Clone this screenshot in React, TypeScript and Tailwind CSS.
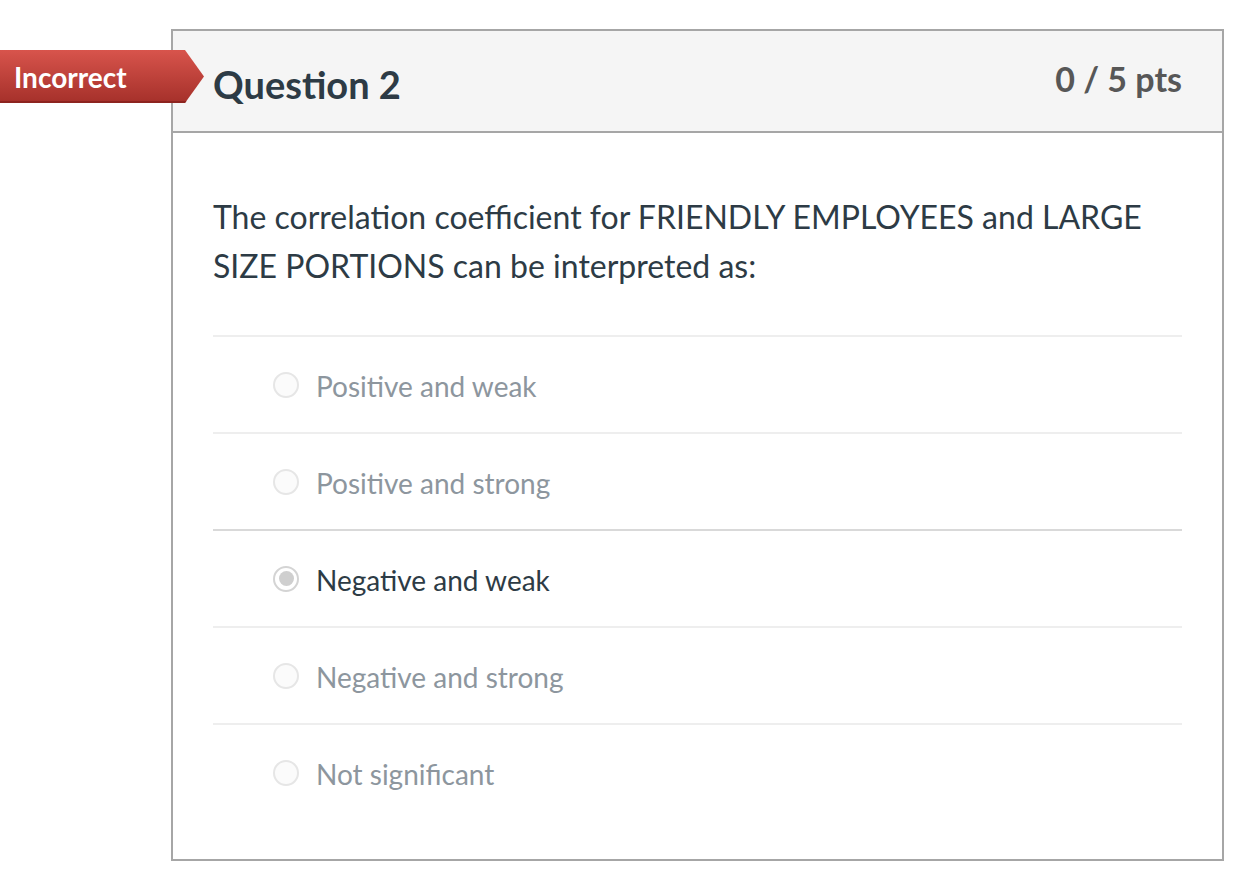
import type { JSX } from "react";

type Answer = { label: string; selected?: boolean };

const answers: Answer[] = [
  { label: "Positive and weak" },
  { label: "Positive and strong" },
  { label: "Negative and weak", selected: true },
  { label: "Negative and strong" },
  { label: "Not significant" },
];

const Radio = ({ selected }: { selected?: boolean }): JSX.Element =>
  selected ? (
    <span className="flex h-[26px] w-[26px] shrink-0 items-center justify-center rounded-full border-2 border-[#d4d4d4] bg-white">
      <span className="h-[15px] w-[15px] rounded-full bg-[#cfcfcf]" />
    </span>
  ) : (
    <span className="h-[26px] w-[26px] shrink-0 rounded-full border-2 border-[#e6e6e6] bg-[#fbfbfb]" />
  );

export default function App(): JSX.Element {
  return (
    <div className="min-h-[876px] w-full bg-white pt-[29px] [font-family:Lato,'Noto_Sans',sans-serif]">
      <div className="relative ml-[171px] w-[1053px] border-2 border-[#a6a6a6] bg-white">
        {/* header */}
        <div className="flex h-[102px] items-start justify-between border-b-2 border-[#a6a6a6] bg-[#f5f5f5] pl-[40px] pr-[40px]">
          <h2 className="mt-[29px] text-[38px] font-bold leading-[48px] text-[#2d3b45]">
            Question 2
          </h2>
          <div className="mt-[24px] text-[34px] font-bold leading-[48px] text-[#575757]">
            0 / 5 pts
          </div>
        </div>

        {/* incorrect badge */}
        <div className="absolute left-[-173px] top-[19px] flex h-[53px] w-[204px] items-center bg-gradient-to-b from-[#d8544c] to-[#a5302a] pl-[14px] shadow-[inset_0_-2px_0_#8d241f] [clip-path:polygon(0_0,185px_0,204px_50%,185px_100%,0_100%)]">
          <span className="text-[28px] font-bold leading-none text-white">
            Incorrect
          </span>
        </div>

        {/* body */}
        <div className="px-[40px] pb-[39px] pt-[59px]">
          <p className="text-[32px] leading-[49px] text-[#2d3b45]">
            The correlation coefficient for FRIENDLY EMPLOYEES and LARGE SIZE
            PORTIONS can be interpreted as:
          </p>

          <div className="mt-[45px]">
            {answers.map((a) => (
              <div
                key={a.label}
                className={`flex h-[97px] items-center gap-[17px] border-t-2 pl-[60px] ${
                  a.selected ? "border-[#d9d9d9]" : "border-[#eeeeee]"
                }`}
              >
                <Radio selected={a.selected} />
                <span
                  className={`pt-[2px] text-[28px] leading-none ${
                    a.selected ? "text-[#2d3b45]" : "text-[#8d969e]"
                  }`}
                >
                  {a.label}
                </span>
              </div>
            ))}
          </div>
        </div>
      </div>
    </div>
  );
}
